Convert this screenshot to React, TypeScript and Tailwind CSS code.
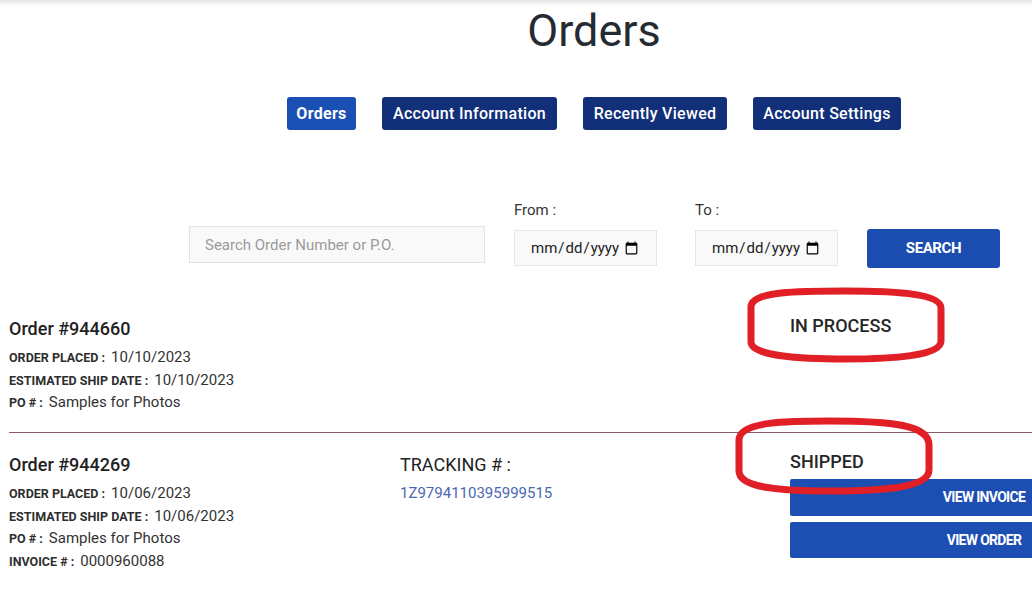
import React from 'react';

const tabs = [
  { label: 'Orders', w: 'w-[69px]', active: true },
  { label: 'Account Information', w: 'w-[175px]', active: false },
  { label: 'Recently Viewed', w: 'w-[144px]', active: false },
  { label: 'Account Settings', w: 'w-[148px]', active: false },
];

function Row({ label, value }: { label: string; value: string }) {
  return (
    <div className="h-[22.5px] text-[15px] leading-[22.5px] whitespace-nowrap">
      <span className="text-[12.5px] font-bold text-[#2e2e2e]">{label} :</span>
      <span className="ml-[6px] text-[15px] text-[#333]">{value}</span>
    </div>
  );
}

export default function App() {
  return (
    <div
      className="relative w-[1032px] h-[591px] overflow-hidden bg-white text-[#2b2b2b]"
      style={{ fontFamily: 'Roboto, "Liberation Sans", sans-serif' }}
    >
      <div className="h-[6px] bg-gradient-to-b from-[#e4e4e4] to-white" />

      <h1 className="mt-[2px] pl-[156px] text-center text-[45px] leading-[45px] font-normal text-[#262b33]">
        Orders
      </h1>

      <div className="mt-[44px] ml-[287px] flex gap-[26px]">
        {tabs.map((t) => (
          <button
            key={t.label}
            className={`${t.w} h-[33px] rounded-[3px] text-[16px] leading-[33px] text-white tracking-[0.3px] ${
              t.active ? 'bg-[#1a4fb4] font-bold' : 'bg-[#12307a] font-medium'
            }`}
          >
            {t.label}
          </button>
        ))}
      </div>

      <div className="mt-[70px] flex items-start">
        <input
          placeholder="Search Order Number or P.O."
          className="ml-[189px] mt-[26px] w-[296px] h-[37px] border border-[#e3e3e3] bg-[#f9f9f9] pl-[15px] text-[15px] placeholder:text-[#9b9b9b] outline-none"
        />
        <div className="ml-[29px] w-[143px]">
          <div className="text-[15px] leading-[20px] text-[#333]">From :</div>
          <input
            type="date"
            className="mt-[10px] w-[143px] h-[36px] border border-[#e6e6e6] bg-[#f9f9f9] px-[15px] text-[15px] text-[#222]"
          />
        </div>
        <div className="ml-[38px] w-[143px]">
          <div className="text-[15px] leading-[20px] text-[#333]">To :</div>
          <input
            type="date"
            className="mt-[10px] w-[143px] h-[36px] border border-[#e6e6e6] bg-[#f9f9f9] px-[15px] text-[15px] text-[#222]"
          />
        </div>
        <button className="ml-[29px] mt-[29px] w-[133px] h-[39px] rounded-[3px] bg-[#1b4db0] text-white text-[15px] font-bold tracking-[-0.4px]">
          SEARCH
        </button>
      </div>

      {/* order 1 */}
      <div className="mt-[49px] flex">
        <div className="w-[400px] flex-none pl-[9px]">
          <div className="text-[18px] leading-[24px] font-medium text-[#222]">Order #944660</div>
          <div className="mt-[5px]">
            <Row label="ORDER PLACED" value="10/10/2023" />
            <Row label="ESTIMATED SHIP DATE" value="10/10/2023" />
            <Row label="PO #" value="Samples for Photos" />
          </div>
        </div>
        <div className="w-[390px] flex-none" />
        <div className="flex-none text-[18px] leading-[18px] font-medium text-[#262626]">IN PROCESS</div>
      </div>

      <div className="mt-[18px] ml-[9px] h-[1.5px] bg-[#8a5d64]" />

      {/* order 2 */}
      <div className="mt-[20px] flex">
        <div className="w-[400px] flex-none pl-[9px]">
          <div className="text-[18px] leading-[24px] font-medium text-[#222]">Order #944269</div>
          <div className="mt-[5px]">
            <Row label="ORDER PLACED" value="10/06/2023" />
            <Row label="ESTIMATED SHIP DATE" value="10/06/2023" />
            <Row label="PO #" value="Samples for Photos" />
            <Row label="INVOICE #" value="0000960088" />
          </div>
        </div>
        <div className="w-[390px] flex-none">
          <div className="text-[18px] leading-[24px] text-[#222]">TRACKING # :</div>
          <div className="mt-[5px] text-[15px] leading-[22.5px] text-[#4a68b0]">1Z9794110395999515</div>
        </div>
        <div className="flex-none">
          <div className="text-[18px] leading-[18px] font-medium text-[#262626]">SHIPPED</div>
          <button className="mt-[8px] block w-[388px] h-[37px] rounded-[2px] bg-[#1d4fb2] text-white text-[14px] font-bold tracking-[-0.7px]">
            VIEW INVOICE
          </button>
          <button className="mt-[6px] block w-[388px] h-[36px] rounded-[2px] bg-[#1d4fb2] text-white text-[14px] font-bold tracking-[-0.7px]">
            VIEW ORDER
          </button>
        </div>
      </div>

      {/* red annotation circles */}
      <svg className="absolute inset-0 pointer-events-none" width="1032" height="591">
        <path
          d="M 751 307 C 751 291, 800 291, 846 291 C 892 291, 941 293, 941 308 L 941 341 C 941 356, 892 359, 846 359 C 800 359, 751 356, 751 342 Z"
          fill="none"
          stroke="#e11f26"
          strokeWidth="7"
        />
        <path
          d="M 739 440 C 739 421, 790 421, 830 421 C 892 421, 929 425, 929 445 L 929 470 C 929 488, 880 491, 830 491 C 780 491, 739 488, 739 471 Z"
          fill="none"
          stroke="#e11f26"
          strokeWidth="7"
        />
      </svg>
    </div>
  );
}
